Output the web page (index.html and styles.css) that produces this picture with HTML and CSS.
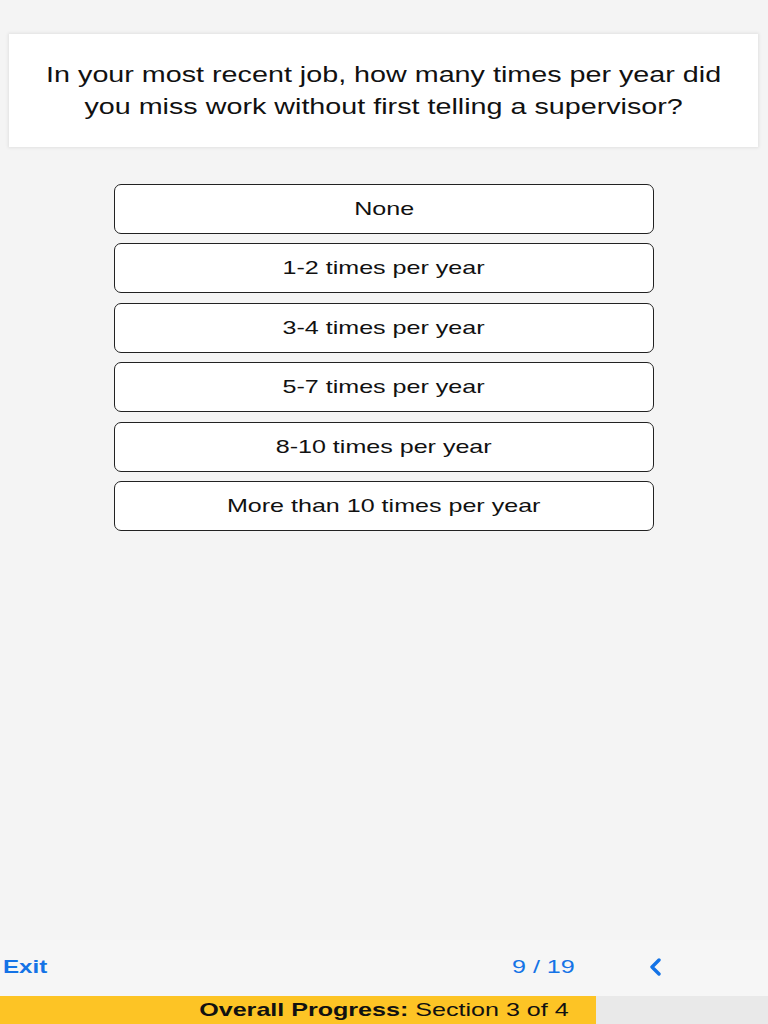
FILE: index.html
```html
<!DOCTYPE html>
<html>
<head>
<meta charset="utf-8">
<link rel="stylesheet" href="styles.css">
</head>
<body>
<div class="page">
  <main class="content">
    <div class="question"><span class="wide q">In your most recent job, how many times per year did<br>you miss work without first telling a supervisor?</span></div>
    <div class="options">
      <button class="option"><span class="wide">None</span></button>
      <button class="option"><span class="wide">1-2 times per year</span></button>
      <button class="option"><span class="wide">3-4 times per year</span></button>
      <button class="option"><span class="wide">5-7 times per year</span></button>
      <button class="option"><span class="wide">8-10 times per year</span></button>
      <button class="option"><span class="wide">More than 10 times per year</span></button>
    </div>
  </main>
  <footer class="footer">
    <div class="nav">
      <span class="exit"><span class="wide left ex">Exit</span></span>
      <span class="count"><span class="wide left">9 / 19</span></span>
      <span class="back"><svg width="14" height="18" viewBox="0 0 14 18"><path d="M11 2 L4 9 L11 16" fill="none" stroke="#1473e6" stroke-width="3.4" stroke-linecap="round" stroke-linejoin="round"/></svg></span>
    </div>
    <div class="progress">
      <div class="fill" style="width:596px"></div>
      <div class="progress-text"><span class="wide"><b>Overall Progress:</b> Section 3 of 4</span></div>
    </div>
  </footer>
</div>
</body>
</html>
```

FILE: styles.css
```css
* { box-sizing: border-box; }
html, body { margin: 0; padding: 0; }
body {
  background: #f4f4f4;
  font-family: "Liberation Sans", Arial, sans-serif;
  color: #111;
}
.wide {
  display: inline-block;
  transform: scaleX(1.32);
  white-space: nowrap;
}
.wide.left { transform-origin: left center; }
.page {
  height: 1024px;
  display: flex;
  flex-direction: column;
}
.content {
  flex: 1;
  padding: 34px 10px 0 9px;
}
.question {
  background: #fff;
  height: 113px;
  display: flex;
  align-items: center;
  justify-content: center;
  text-align: center;
  font-size: 22px;
  line-height: 32px;
  box-shadow: 0 0 3px 1px rgba(0,0,0,0.08);
}
.question .q { transform: scaleX(1.305); }
.options {
  margin: 37px 0 0 105px;
  width: 540px;
  display: flex;
  flex-direction: column;
  gap: 9.4px;
}
.option {
  height: 50px;
  background: #fff;
  border: 1.5px solid #222;
  border-radius: 7px;
  font-family: "Liberation Sans", Arial, sans-serif;
  font-size: 18.5px;
  color: #111;
  padding: 0;
}
.option .wide { transform: scaleX(1.355); }
.footer {
  background: #f6f6f6;
}
.nav {
  height: 56px;
  display: flex;
  align-items: center;
  font-size: 19px;
  color: #1473e6;
  padding-bottom: 2px;
}
.exit {
  font-weight: bold;
  margin-left: 3px;
  width: 509px;
}
.exit .ex { transform: scaleX(1.27); }
.count {
  width: 136px;
}
.back {
  display: flex;
  align-items: center;
}
.progress {
  position: relative;
  height: 28px;
  background: #e9e9e9;
}
.fill {
  position: absolute;
  left: 0;
  top: 0;
  bottom: 0;
  background: #fdc425;
}
.progress-text {
  position: relative;
  text-align: center;
  font-size: 19px;
  line-height: 28px;
  color: #111;
}
```
